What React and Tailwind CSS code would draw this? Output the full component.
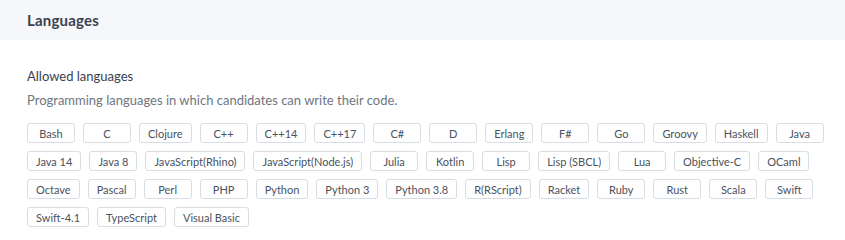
import React from "react";

const languages = [
  "Bash", "C", "Clojure", "C++", "C++14", "C++17", "C#", "D", "Erlang", "F#", "Go", "Groovy", "Haskell", "Java",
  "Java 14", "Java 8", "JavaScript(Rhino)", "JavaScript(Node.js)", "Julia", "Kotlin", "Lisp", "Lisp (SBCL)", "Lua", "Objective-C", "OCaml",
  "Octave", "Pascal", "Perl", "PHP", "Python", "Python 3", "Python 3.8", "R(RScript)", "Racket", "Ruby", "Rust", "Scala", "Swift",
  "Swift-4.1", "TypeScript", "Visual Basic",
];

export default function App() {
  return (
    <div className="w-[845px] h-[240px] bg-white" style={{ fontFamily: "Lato, 'Open Sans', sans-serif" }}>
      {/* Header */}
      <div className="h-[40px] bg-[#f6f7fb] flex items-center px-[27px]">
        <h2 className="text-[15px] font-bold text-[#39424e] tracking-[0.2px]">Languages</h2>
      </div>

      {/* Body */}
      <div className="pl-[27px] pr-[14px] pt-[27px]">
        <div className="text-[13px] text-[#39424e] leading-[18px]">Allowed languages</div>
        <div className="text-[13px] text-[#6f7581] leading-[18px] mt-[6px]">
          Programming languages in which candidates can write their code.
        </div>
        <div className="flex flex-wrap gap-x-[8px] gap-y-[8px] mt-[14px]">
          {languages.map((lang) => (
            <span
              key={lang}
              className="h-[20px] min-w-[48px] px-[8px] flex items-center justify-center border border-[#d8dce3] rounded-[3px] text-[11px] text-[#4a5260] leading-none"
            >
              {lang}
            </span>
          ))}
        </div>
      </div>
    </div>
  );
}
